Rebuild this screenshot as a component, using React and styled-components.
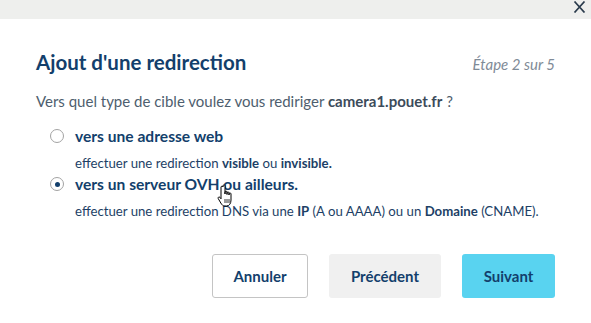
import React, { useState } from "react";
import styled, { createGlobalStyle } from "styled-components";

const GlobalStyle = createGlobalStyle`
  html, body {
    margin: 0;
    padding: 0;
    background: #ffffff;
    font-family: "Lato", "Noto Sans", sans-serif;
  }
`;

const Page = styled.div`
  width: 591px;
  height: 323px;
  position: relative;
  overflow: hidden;
  background: #fff;
`;

const TopBar = styled.div`
  height: 19px;
  background: #eeefed;
  display: flex;
  justify-content: flex-end;
  align-items: flex-start;
  padding-right: 5px;
`;

const CloseButton = styled.button`
  border: none;
  background: none;
  padding: 0;
  width: 14px;
  height: 13px;
  display: flex;
  align-items: center;
  justify-content: center;
  cursor: pointer;
`;

const Body = styled.div`
  padding: 31px 36px 0 36px;
`;

const Header = styled.div`
  display: flex;
  justify-content: space-between;
  align-items: baseline;
`;

const Title = styled.h2`
  margin: 0;
  font-size: 20.5px;
  line-height: 24px;
  font-weight: 700;
  color: #133f6c;
`;

const Step = styled.span`
  font-size: 15px;
  font-style: italic;
  color: #7f8b97;
`;

const Question = styled.p`
  margin: 17px 0 0;
  font-size: 15px;
  line-height: 20px;
  color: #4e5e6e;
  b {
    color: #3c4b5a;
  }
`;

const Options = styled.div`
  margin-top: 14px;
  padding-left: 14px;
  display: flex;
  flex-direction: column;
`;

const Option = styled.label`
  display: flex;
  flex-direction: column;
  cursor: pointer;
  margin-bottom: ${(p) => (p.last ? 0 : 1)}px;
`;

const OptionRow = styled.div`
  display: flex;
  align-items: center;
  gap: 11px;
  height: 22px;
`;

const Radio = styled.span`
  box-sizing: border-box;
  width: 14px;
  height: 14px;
  border-radius: 50%;
  border: 1px solid #a3a3a3;
  background: #fff;
  display: flex;
  align-items: center;
  justify-content: center;
  &::after {
    content: "";
    width: 5px;
    height: 5px;
    border-radius: 50%;
    background: ${(p) => (p.checked ? "#133f6c" : "transparent")};
  }
`;

const OptionLabel = styled.span`
  font-size: 15.6px;
  font-weight: 700;
  color: #133f6c;
`;

const OptionDesc = styled.div`
  margin: 7px 0 0 25px;
  font-size: 13.2px;
  line-height: 18px;
  white-space: nowrap;
  color: #1d3f66;
  b {
    font-weight: 700;
  }
`;

const Footer = styled.div`
  display: flex;
  justify-content: flex-end;
  gap: 21px;
  margin-top: 34px;
`;

const Button = styled.button`
  height: 44px;
  width: ${(p) => p.w}px;
  padding: 0;
  border-radius: 3px;
  border: 1px solid ${(p) => (p.variant === "outline" ? "#c4c4c4" : "transparent")};
  background: ${(p) =>
    p.variant === "primary" ? "#59d3f0" : p.variant === "grey" ? "#f0f0f0" : "#fff"};
  color: #133f6c;
  font-family: "Lato", "Noto Sans", sans-serif;
  font-size: 15px;
  font-weight: 700;
  cursor: pointer;
`;

const Cursor = styled.svg`
  position: absolute;
  left: 217px;
  top: 184px;
  pointer-events: none;
`;

const App = () => {
  const [choice, setChoice] = useState("dns");

  return (
    <Page>
      <GlobalStyle />
      <TopBar>
        <CloseButton aria-label="Fermer">
          <svg width="13" height="12" viewBox="0 0 13 12">
            <path d="M1.5 0.5 L11.5 11.5 M11.5 0.5 L1.5 11.5" stroke="#2a3b4c" strokeWidth="1.7" />
          </svg>
        </CloseButton>
      </TopBar>
      <Body>
        <Header>
          <Title>Ajout d'une redirection</Title>
          <Step>Étape 2 sur 5</Step>
        </Header>
        <Question>
          Vers quel type de cible voulez vous rediriger <b>camera1.pouet.fr</b> ?
        </Question>
        <Options>
          <Option onClick={() => setChoice("web")}>
            <OptionRow>
              <Radio checked={choice === "web"} />
              <OptionLabel>vers une adresse web</OptionLabel>
            </OptionRow>
            <OptionDesc>
              effectuer une redirection <b>visible</b> ou <b>invisible.</b>
            </OptionDesc>
          </Option>
          <Option last onClick={() => setChoice("dns")}>
            <OptionRow>
              <Radio checked={choice === "dns"} />
              <OptionLabel>vers un serveur OVH ou ailleurs.</OptionLabel>
            </OptionRow>
            <OptionDesc>
              effectuer une redirection DNS via une <b>IP</b> (A ou AAAA) ou un <b>Domaine</b> (CNAME).
            </OptionDesc>
          </Option>
        </Options>
        <Footer>
          <Button variant="outline" w={96}>Annuler</Button>
          <Button variant="grey" w={112}>Précédent</Button>
          <Button variant="primary" w={93}>Suivant</Button>
        </Footer>
      </Body>
      <Cursor width="18" height="24" viewBox="0 0 18 24">
        <path
          d="M6 1.8 C6 0.6 8 0.6 8 1.8 L8 10 L8 8 C8 6.9 10 6.9 10 8 L10 10.5 L10 8.8 C10 7.7 12 7.7 12 8.8 L12 11 L12 9.8 C12 8.7 14 8.7 14 9.8 L14 16 C14 19.5 12.3 22 9.5 22 L8 22 C6 22 5 21 3.8 19 L1.2 14.5 C0.6 13.4 2 12.4 3 13.4 L4 14.8 L4 3 C4 1.9 6 1.9 6 3 Z"
          fill="#fff"
          stroke="#000"
          strokeWidth="1"
        />
        <path d="M8 15 L8 19 M10 15 L10 19 M12 15 L12 19" stroke="#000" strokeWidth="0.8" />
      </Cursor>
    </Page>
  );
};

export default App;
